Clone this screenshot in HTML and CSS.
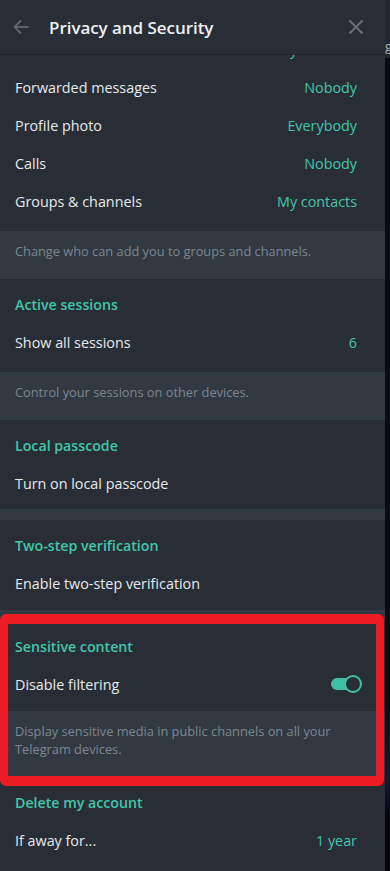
FILE: index.html
```html
<!DOCTYPE html>
<html lang="en">
<head>
<meta charset="utf-8">
<title>Privacy and Security</title>
<link rel="stylesheet" href="styles.css">
</head>
<body>
<div class="screen">
  <div class="panel">
    <header class="topbar">
      <svg class="icon back" width="18" height="18" viewBox="0 0 18 18"><path d="M16.5 9H2.5M9 2.5L2.5 9L9 15.5" fill="none" stroke="currentColor" stroke-width="1.8"/></svg>
      <div class="title">Privacy and Security</div>
      <svg class="icon close" width="16" height="16" viewBox="0 0 16 16"><path d="M1.5 1.5L14.5 14.5M14.5 1.5L1.5 14.5" fill="none" stroke="currentColor" stroke-width="1.9"/></svg>
    </header>
    <div class="viewport">
      <div class="content">
        <section class="section first pb11">
          <div class="row"><span class="label">Last seen &amp; online</span><span class="value">My contacts</span></div>
          <div class="row"><span class="label">Forwarded messages</span><span class="value">Nobody</span></div>
          <div class="row"><span class="label">Profile photo</span><span class="value">Everybody</span></div>
          <div class="row"><span class="label">Calls</span><span class="value">Nobody</span></div>
          <div class="row"><span class="label">Groups &amp; channels</span><span class="value">My contacts</span></div>
        </section>
        <div class="about">Change who can add you to groups and channels.</div>

        <section class="section pb11">
          <div class="subhead">Active sessions</div>
          <div class="row"><span class="label">Show all sessions</span><span class="value">6</span></div>
        </section>
        <div class="about">Control your sessions on other devices.</div>

        <section class="section pb7">
          <div class="subhead">Local passcode</div>
          <div class="row"><span class="label">Turn on local passcode</span></div>
        </section>
        <div class="divider"></div>

        <section class="section">
          <div class="subhead">Two-step verification</div>
          <div class="row"><span class="label">Enable two-step verification</span></div>
        </section>
        <div class="divider"></div>

        <section class="section">
          <div class="subhead">Sensitive content</div>
          <div class="row"><span class="label">Disable filtering</span><span class="toggle"><span class="track"></span><span class="knob"></span></span></div>
        </section>
        <div class="about">Display sensitive media in public channels on all your Telegram devices.</div>

        <section class="section">
          <div class="subhead">Delete my account</div>
          <div class="row"><span class="label">If away for...</span><span class="value">1 year</span></div>
        </section>
      </div>
    </div>
    <div class="highlight"></div>
  </div>
  <div class="edge"><span class="edge-glyph">g</span></div>
</div>
</body>
</html>
```

FILE: styles.css
```css
* { box-sizing: border-box; }
html, body { margin: 0; padding: 0; }
body {
  background: #0b0c14;
  font-family: "Open Sans", "Noto Sans", sans-serif;
  font-size: 14.35px;
  color: #e6e9ec;
}
.screen {
  display: flex;
  width: 390px;
  height: 871px;
  overflow: hidden;
}
.panel {
  position: relative;
  width: 385px;
  height: 871px;
  background: #292e36;
  display: flex;
  flex-direction: column;
}
.topbar {
  height: 55px;
  flex: none;
  display: flex;
  align-items: center;
  padding: 0 21px 0 12px;
  border-bottom: 1px solid #23272d;
  background: #292e36;
}
.icon { display: block; flex: none; }
.back { color: #5e656d; }
.close { color: #6a7179; margin-left: auto; }
.title {
  margin-left: 19px;
  font-size: 17px;
  font-weight: 600;
  color: #eef0f2;
  letter-spacing: -0.05px;
}
.viewport {
  flex: 1;
  overflow: hidden;
}
.content { margin-top: -25px; }
.section { padding: 6px 0 8px; }
.section.first { padding-top: 0; }
.section.pb11 { padding-bottom: 11px; }
.section.pb7 { padding-bottom: 7px; }
.row {
  height: 38px;
  display: flex;
  align-items: center;
  justify-content: space-between;
  padding: 0 28px 0 15px;
}
.subhead {
  height: 38px;
  display: flex;
  align-items: center;
  padding: 0 15px;
  color: #41c6aa;
  font-weight: 600;
  font-size: 14.2px;
}
.value { color: #41c6aa; }
.about {
  background: #313a42;
  color: #7d868f;
  font-size: 12.8px;
  line-height: 18px;
  padding: 11px 40px 19px 15px;
}
.divider {
  height: 11px;
  background: #313a42;
}
.toggle {
  position: relative;
  width: 31px;
  height: 18px;
  margin-right: -5px;
}
.track {
  position: absolute;
  left: 0;
  top: 3px;
  width: 26px;
  height: 12px;
  border-radius: 6px;
  background: #3ebfa6;
}
.knob {
  position: absolute;
  right: 0;
  top: 0;
  width: 18px;
  height: 18px;
  border-radius: 50%;
  border: 2.5px solid #3ebfa6;
  background: #292e36;
}
.highlight {
  position: absolute;
  left: 0;
  top: 614px;
  width: 384px;
  height: 172px;
  border-style: solid;
  border-color: #ed1c24;
  border-width: 10px 8px;
  border-radius: 6px;
  pointer-events: none;
}
.edge {
  flex: 1;
  height: 871px;
  background: linear-gradient(to bottom, #23272d 0, #23272d 58px, #0a0b14 58px, #0a0b14 700px, #151836 780px, #05050a 820px);
  overflow: hidden;
}
.edge-glyph {
  display: block;
  margin-top: 38px;
  margin-left: 0;
  color: #b0b4b8;
  font-size: 13px;
  line-height: 16px;
}
```
